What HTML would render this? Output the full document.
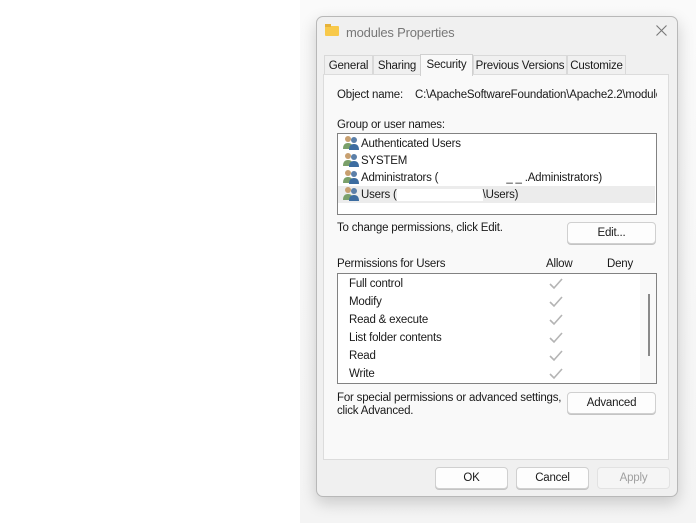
<!DOCTYPE html>
<html><head><style>
body{margin:0;width:696px;height:523px;background:#fff;position:relative;overflow:hidden;font-family:"Liberation Sans",sans-serif;font-size:11px;letter-spacing:-0.2px;color:#1a1a1a}
.a{position:absolute;white-space:nowrap}
.t{margin-top:1px}
.shadow{left:300px;top:0;width:396px;height:523px;background:linear-gradient(#fafafa,#f4f4f4)}
.dlg{left:316px;top:16px;width:360px;height:479px;background:#f0f0f0;border:1px solid #b8b8b8;border-radius:7px;box-shadow:0 6px 16px rgba(0,0,0,.18)}
.tab{top:55px;height:19px;background:#f0f0f0;border:1px solid #d9d9d9;border-bottom:none;line-height:21px;text-align:center;font-size:11.5px}
.panel{left:323px;top:74px;width:344px;height:384px;background:#f9f9f9;border:1px solid #dcdcdc}
.box{background:#fff;border:1px solid #828282}
.btn{background:#fdfdfd;border:1px solid #d0d0d0;border-radius:4px;text-align:center;font-size:11.5px;box-shadow:0 1px 0 #c4c4c4}
.row{height:17px;line-height:19px;font-size:11.5px}
</style></head><body>
<div class="a shadow"></div>
<div class="a dlg"></div>
<div class="a" style="left:325px;top:26px;width:14px;height:10px;background:#f8c94a;border-radius:1px"></div>
<div class="a" style="left:325px;top:24px;width:6px;height:3px;background:#e6b23a"></div>
<div class="a" style="left:346px;top:25px;font-size:13px;color:#777">modules Properties</div>
<svg class="a" style="left:656px;top:25px" width="11" height="11"><path d="M0.5 0.5L10.5 10.5M10.5 0.5L0.5 10.5" stroke="#777" stroke-width="1.1"/></svg>
<div class="a tab" style="left:324px;width:47px">General</div>
<div class="a tab" style="left:373px;width:46px">Sharing</div>
<div class="a tab" style="left:473px;width:92px">Previous Versions</div>
<div class="a tab" style="left:567px;width:57px">Customize</div>
<div class="a panel"></div>
<div class="a tab" style="left:420px;top:54px;width:51px;height:21px;background:#f9f9f9;border-color:#d0d0d0">Security</div>
<div class="a" style="left:337px;top:89px;font-size:11.5px">Object name:</div>
<div class="a" style="left:415px;top:89px;font-size:11.5px;width:242px;overflow:hidden">C:\ApacheSoftwareFoundation\Apache2.2\modules</div>
<div class="a" style="left:337px;top:119px;font-size:11.5px">Group or user names:</div>
<div class="a box" style="left:337px;top:133px;width:318px;height:80px"></div>
<div class="a" style="left:338px;top:186px;width:317px;height:17px;background:#ececec"></div>
<div class="a" style="left:343px;top:135px">
<svg width="16" height="70" viewBox="0 0 16 70">
<g id="u"><circle cx="5" cy="4" r="3" fill="#c8a070"/><path d="M0 14 Q0 8 5 8 Q10 8 10 14Z" fill="#7aa06a"/><circle cx="11" cy="5" r="3" fill="#5b7fa8"/><path d="M6 15 Q6 9 11 9 Q16 9 16 15Z" fill="#3c6ca0"/></g>
<use href="#u" y="17"/><use href="#u" y="34"/><use href="#u" y="51"/></svg></div>
<div class="a row" style="left:361px;top:135px">Authenticated Users</div>
<div class="a row" style="left:361px;top:152px">SYSTEM</div>
<div class="a row" style="left:361px;top:169px">Administrators (<span style="display:inline-block;width:68px"></span>_ _ .Administrators)</div>
<div class="a row" style="left:361px;top:186px">Users (<span style="display:inline-block;width:86px;height:12px;background:#fff;vertical-align:middle"></span>\Users)</div>
<div class="a" style="left:337px;top:222px;font-size:11.5px">To change permissions, click Edit.</div>
<div class="a btn" style="left:567px;top:222px;width:87px;height:20px;line-height:21px">Edit...</div>
<div class="a" style="left:337px;top:258px;font-size:11.5px">Permissions for Users</div>
<div class="a" style="left:546px;top:258px;font-size:11.5px">Allow</div>
<div class="a" style="left:607px;top:258px;font-size:11.5px">Deny</div>
<div class="a box" style="left:337px;top:273px;width:318px;height:109px;overflow:hidden">
<div style="position:absolute;left:302px;top:0;width:16px;height:109px;background:#f9f9f9"></div>
<div style="position:absolute;left:310px;top:20px;width:2px;height:62px;background:#8a8a8a"></div>
</div>
<div class="a row" style="left:349px;top:275px">Full control</div>
<div class="a row" style="left:349px;top:293px">Modify</div>
<div class="a row" style="left:349px;top:311px">Read &amp; execute</div>
<div class="a row" style="left:349px;top:329px">List folder contents</div>
<div class="a row" style="left:349px;top:347px">Read</div>
<div class="a row" style="left:349px;top:365px">Write</div>
<svg class="a" style="left:548px;top:277px" width="16" height="106"><g fill="none" stroke="#b4b4b4" stroke-width="1.6"><path id="c" d="M2 7 L6 11 L14 2"/><use href="#c" y="18"/><use href="#c" y="36"/><use href="#c" y="54"/><use href="#c" y="72"/><use href="#c" y="90"/></g></svg>
<div class="a" style="left:337px;top:392px;font-size:11.5px;line-height:13px">For special permissions or advanced settings,<br>click Advanced.</div>
<div class="a btn" style="left:567px;top:392px;width:87px;height:20px;line-height:21px">Advanced</div>
<div class="a btn" style="left:435px;top:467px;width:71px;height:20px;line-height:21px">OK</div>
<div class="a btn" style="left:516px;top:467px;width:71px;height:20px;line-height:21px">Cancel</div>
<div class="a btn" style="left:597px;top:467px;width:71px;height:20px;line-height:21px;color:#a0a0a0;background:#f5f5f5;border-color:#e2e2e2;box-shadow:none">Apply</div>
</body></html>
